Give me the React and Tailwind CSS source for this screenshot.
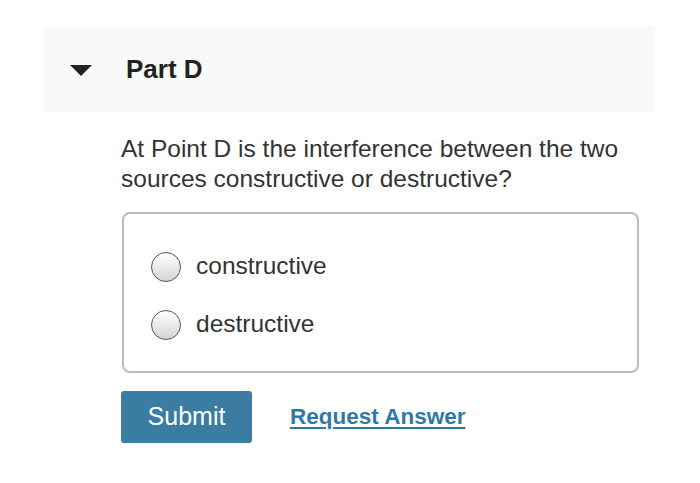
import React from 'react';

const Radio = ({ label }) => (
    <label className="flex items-center gap-[15px] cursor-pointer">
        <span className="w-[30px] h-[30px] rounded-full border-[1.5px] border-[#555] bg-gradient-to-b from-white to-[#d4d4d4] shrink-0"></span>
        <span className="text-[24.5px] text-[#333] leading-none">{label}</span>
    </label>
);

const App = () => {
    return (
        <div className="w-[700px] h-[483px] bg-white pt-[26px] font-['Liberation_Sans',Arial,sans-serif]">
            <div className="ml-[44px] w-[611px] h-[86px] bg-[#f9f9f9] flex items-center">
                <svg width="22" height="11" viewBox="0 0 22 11" className="ml-[26px] mt-[2px]">
                    <polygon points="0,0 22,0 11,11" fill="#222" />
                </svg>
                <h3 className="ml-[34px] text-[26px] font-bold text-[#222]">Part D</h3>
            </div>
            <div className="ml-[121px] w-[530px]">
                <p className="mt-[22px] text-[24.5px] leading-[30px] text-[#333]">
                    At Point D is the interference between the two sources constructive or destructive?
                </p>
                <div className="mt-[18px] ml-[1px] w-[517px] h-[161px] border-2 border-[#bcbcbc] rounded-[8px] flex flex-col justify-center gap-[28px] pl-[27px] pt-[6px]">
                    <Radio label="constructive" />
                    <Radio label="destructive" />
                </div>
                <div className="mt-[18px] flex items-start gap-[38px]">
                    <button className="w-[131px] h-[52px] rounded-[3px] bg-[#3a7ca2] text-white text-[25px]">
                        Submit
                    </button>
                    <a href="#" className="mt-[9px] text-[22.5px] font-bold text-[#2e7aa6] underline underline-offset-[3px]">
                        Request Answer
                    </a>
                </div>
            </div>
        </div>
    );
};

export default App;
